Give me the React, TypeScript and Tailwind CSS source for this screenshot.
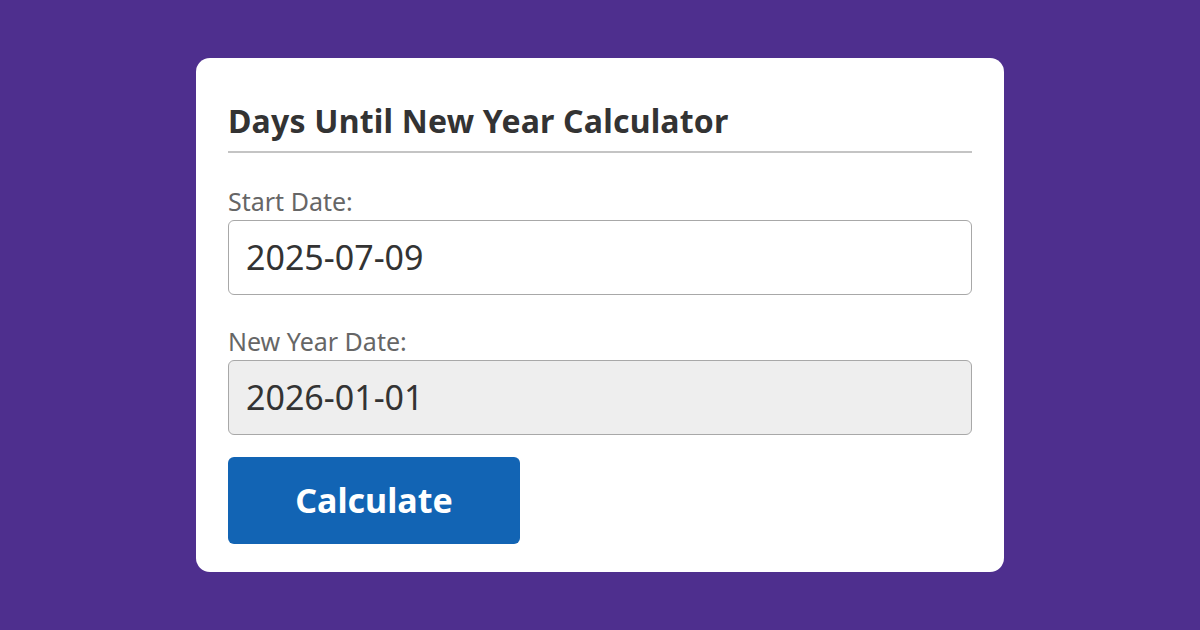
export default function App() {
  return (
    <div className="w-[1200px] h-[630px] bg-[#4e2f8e] flex items-start justify-center pt-[58px] font-['Noto_Sans',sans-serif]">
      <div className="w-[808px] h-[514px] bg-white rounded-[14px] px-[32px] pt-[32px] flex flex-col">
        <h1 className="pt-[9px] text-[32px] leading-[44px] font-bold text-[#333] pb-[8px] border-b-2 border-[#c4c4c4] tracking-[0.2px]">
          Days Until New Year Calculator
        </h1>
        <label className="mt-[32px] text-[25px] leading-[32px] text-[#666]">Start Date:</label>
        <div className="mt-[3px] h-[75px] border-[1.5px] border-[#a8a8a8] rounded-[6px] flex items-center px-[17px] text-[34px] text-[#333]">
          2025-07-09
        </div>
        <label className="mt-[30px] text-[25px] leading-[32px] text-[#666]">New Year Date:</label>
        <div className="mt-[3px] h-[75px] border-[1.5px] border-[#a8a8a8] bg-[#eee] rounded-[6px] flex items-center px-[17px] text-[34px] text-[#333]">
          2026-01-01
        </div>
        <button className="mt-[22px] w-[292px] h-[87px] bg-[#1264b4] rounded-[6px] text-white text-[34px] font-bold">
          Calculate
        </button>
      </div>
    </div>
  );
}
